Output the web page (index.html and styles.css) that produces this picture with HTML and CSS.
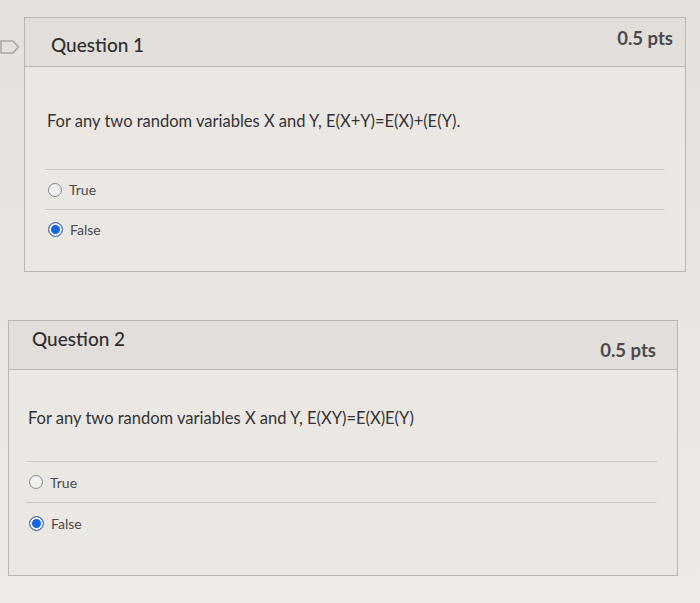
FILE: index.html
```html
<!DOCTYPE html>
<html>
<head>
<meta charset="utf-8">
<link rel="stylesheet" href="styles.css">
</head>
<body>
<div class="page">
  <div class="qwrap q1">
    <svg class="flag" width="20" height="14" viewBox="0 0 20 14"><path d="M1 1 H13 L18.5 7 L13 13 H1 Z" fill="none" stroke="#a9a6a3" stroke-width="1.6" stroke-linejoin="round"/></svg>
    <div class="card">
      <div class="head">
        <span class="title">Question 1</span>
        <span class="pts">0.5 pts</span>
      </div>
      <div class="body">
        <p class="text">For any two random variables X and Y, E(X+Y)=E(X)+(E(Y).</p>
        <div class="answers">
          <div class="ans"><span class="radio"></span><span class="lbl">True</span></div>
          <div class="ans"><span class="radio on"></span><span class="lbl">False</span></div>
        </div>
      </div>
    </div>
  </div>
  <div class="qwrap q2">
    <div class="card">
      <div class="head">
        <span class="title">Question 2</span>
        <span class="pts low">0.5 pts</span>
      </div>
      <div class="body">
        <p class="text">For any two random variables X and Y, E(XY)=E(X)E(Y)</p>
        <div class="answers">
          <div class="ans"><span class="radio"></span><span class="lbl">True</span></div>
          <div class="ans"><span class="radio on"></span><span class="lbl">False</span></div>
        </div>
      </div>
    </div>
  </div>
</div>
</body>
</html>
```
FILE: styles.css
```css
html, body {
  margin: 0;
  padding: 0;
}
body {
  width: 700px;
  height: 603px;
  overflow: hidden;
  background: linear-gradient(180deg, #e4e0dc 0%, #e9e5e1 50%, #eeebe7 100%);
  font-family: Lato, "Open Sans", sans-serif;
  color: #3b3b3d;
}
.page {
  display: flex;
  flex-direction: column;
  gap: 48px;
  padding-top: 17px;
}
.qwrap {
  position: relative;
}
.q1 {
  margin-left: 24px;
  width: 662px;
}
.q2 {
  margin-left: 8px;
  width: 670px;
}
.flag {
  position: absolute;
  left: -24px;
  top: 23px;
}
.card {
  border: 1px solid #b9b5b1;
  background: #ebe7e3;
}
.head {
  height: 48px;
  display: flex;
  align-items: center;
  justify-content: space-between;
  padding: 0 12px 0 26px;
  background: #e2deda;
  border-bottom: 1px solid #bcb8b4;
}
.title {
  font-size: 19px;
  font-weight: 500;
  color: #2f2f33;
  position: relative;
  top: 2px;
}
.pts {
  font-size: 18.5px;
  font-weight: 700;
  color: #4a4a4e;
  position: relative;
  top: -4px;
}
.q2 .title {
  top: -7px;
}
.pts.low {
  top: 5px;
  padding-right: 9px;
}
.body {
  padding: 0 20px 22px 20px;
}
.text {
  margin: 0;
  padding: 44px 0 0 2px;
  height: 58px;
  font-size: 16.5px;
  color: #333336;
}
.answers {
  display: flex;
  flex-direction: column;
}
.ans {
  height: 39px;
  border-top: 1px solid #ccc8c4;
  display: flex;
  align-items: center;
  gap: 7px;
  padding-left: 3px;
}
.radio {
  width: 14px;
  height: 14px;
  border-radius: 50%;
  border: 1px solid #8a8a8c;
  background: #f2f0ee;
  box-sizing: border-box;
}
.radio.on {
  border: 1px solid #5a6f9a;
  background: #1463e0;
  box-shadow: inset 0 0 0 2px #f4f4f6;
  width: 15px;
  height: 15px;
}
.lbl {
  font-size: 14px;
  color: #4b4b4e;
}
.q2 .head {
  padding-left: 23px;
}
.q2 .body {
  padding-left: 17px;
  padding-bottom: 32px;
}
.q2 .text {
  padding-top: 38px;
  height: 53px;
}
.q2 .ans {
  height: 40px;
}
```
